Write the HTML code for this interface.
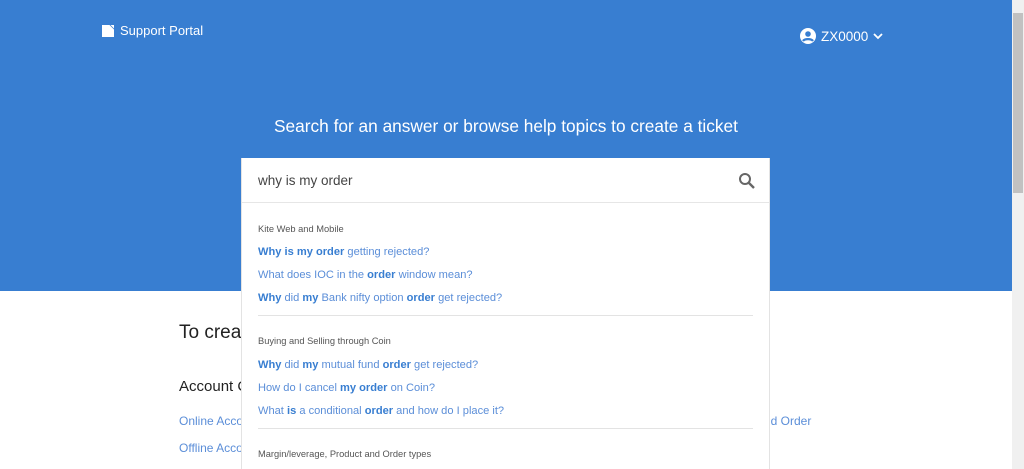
<!DOCTYPE html>
<html><head><meta charset="utf-8"><style>
*{margin:0;padding:0;box-sizing:border-box}
html,body{width:1024px;height:469px;overflow:hidden}
body{background:#fff;font-family:"Liberation Sans",sans-serif;position:relative}
.hero{position:absolute;left:0;top:0;width:1012px;height:291px;background:#387ed1}
.logo{position:absolute;left:102px;top:23px;color:#fff;font-size:13px;display:flex;align-items:center;gap:6px}
.user{position:absolute;left:800px;top:28px;color:#fff;font-size:13.5px;display:flex;align-items:center;gap:5px}
.title{position:absolute;left:0;width:1012px;top:116px;text-align:center;color:#fff;font-size:17.3px}
.box{position:absolute;left:241px;top:158px;width:529px;height:311px;background:#fff;border:1px solid #e3e3e3;border-top:none;border-bottom:none}
.input{height:45px;border-bottom:1px solid #e6e6e6;padding:15px 16px;font-size:13.5px;color:#444;position:relative}
.input svg{position:absolute;right:13px;top:14px}
.sec{padding:0 16px}
.cat{font-size:9.3px;color:#555}
.it{font-size:11.1px;color:#5b8ed8;height:23px;line-height:23px}
.it b{color:#387ed1;font-weight:bold}
hr{border:none;border-top:1px solid #e3e3e3;margin:0 16px}
.h{position:absolute;left:179px;top:322px;font-size:19px;color:#222}
.h2{position:absolute;left:179px;top:378px;font-size:15px;color:#222}
.lnk{position:absolute;font-size:12px;color:#5b8ed8}
.sb{position:absolute;left:1012px;top:0;width:12px;height:469px;background:#f0f0f0}
.th{position:absolute;left:1013px;top:13px;width:10px;height:180px;background:#c1c1c1}
</style></head><body>
<div class="hero">
<div class="logo"><svg width="12" height="12" viewBox="0 0 12 12"><path d="M0 0H7.5L12 4.5V12H0Z" fill="#fff"/><path d="M8.5 0H12V3.5Z" fill="#fff"/></svg>Support Portal</div>
<div class="user"><svg width="16" height="16" viewBox="0 0 16 16"><circle cx="8" cy="8" r="8" fill="#fff"/><circle cx="8" cy="6" r="2.8" fill="#387ed1"/><path d="M3 13c1.5-2.5 8.5-2.5 10 0" stroke="#387ed1" stroke-width="2.2" fill="none"/></svg>ZX0000 <svg width="10" height="8" viewBox="0 0 10 8"><path d="M1 2l4 4 4-4" stroke="#fff" stroke-width="1.8" fill="none"/></svg></div>
<div class="title">Search for an answer or browse help topics to create a ticket</div>
</div>
<div class="h">To creat</div>
<div class="h2">Account C</div>
<div class="lnk" style="left:179px;top:414px">Online Accou</div>
<div class="lnk" style="left:179px;top:441px">Offline Accou</div>
<div class="lnk" style="left:764px;top:414px">nd Order</div>
<div class="box">
<div class="input">why is my order<svg width="18" height="18" viewBox="0 0 18 18"><circle cx="7" cy="7" r="5" stroke="#666" stroke-width="2" fill="none"/><path d="M10.5 10.5L16 16" stroke="#666" stroke-width="2.4"/></svg></div>
<div class="sec" style="padding-top:21px"><div class="cat">Kite Web and Mobile</div>
<div style="height:7px"></div>
<div class="it"><b>Why is my order</b> getting rejected?</div>
<div class="it">What does IOC in the <b>order</b> window mean?</div>
<div class="it"><b>Why</b> did <b>my</b> Bank nifty option <b>order</b> get rejected?</div></div>
<div style="height:5px"></div><hr>
<div class="sec" style="padding-top:20px"><div class="cat">Buying and Selling through Coin</div>
<div style="height:8px"></div>
<div class="it"><b>Why</b> did <b>my</b> mutual fund <b>order</b> get rejected?</div>
<div class="it">How do I cancel <b>my order</b> on Coin?</div>
<div class="it">What <b>is</b> a conditional <b>order</b> and how do I place it?</div></div>
<div style="height:5px"></div><hr>
<div class="sec" style="padding-top:20px"><div class="cat">Margin/leverage, Product and Order types</div></div>
</div>
<div class="sb"></div><div class="th"></div>
</body></html>
